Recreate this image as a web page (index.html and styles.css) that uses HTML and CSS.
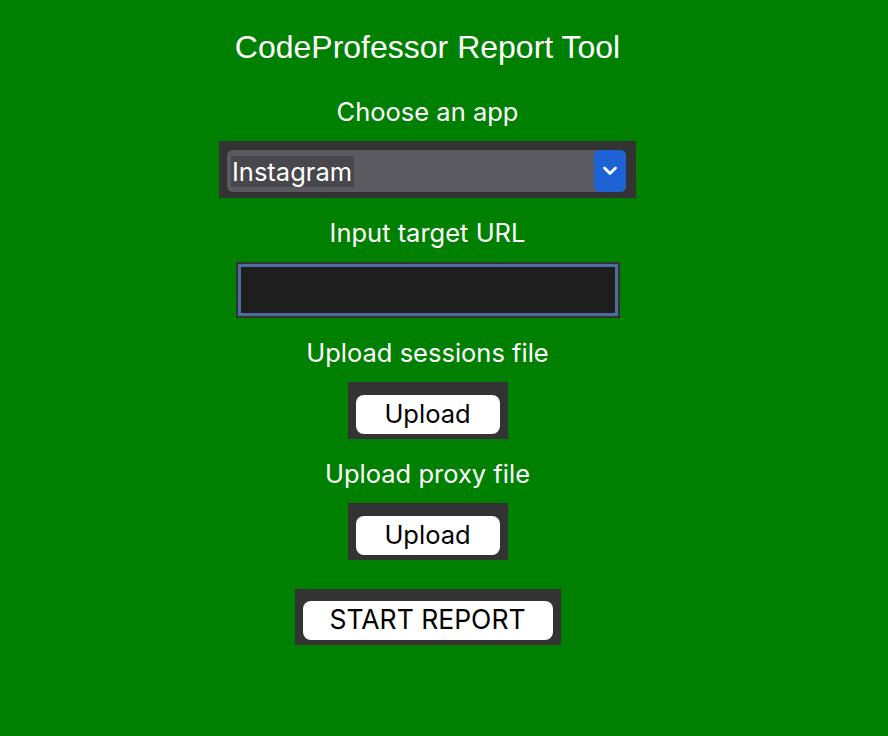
FILE: index.html
```html
<!DOCTYPE html>
<html lang="en">
<head>
  <meta charset="UTF-8" />
  <meta name="viewport" content="width=device-width, initial-scale=1.0"/>
  <title>CodeProfessor Report Tool</title>
  <link rel="stylesheet" href="styles.css">
</head>
<body>

  <div class="page">
    <h1>CodeProfessor Report Tool</h1>

    <!-- App choice -->
    <label class="field-label">Choose an app</label>
    <div class="frame frame-select">
      <div class="app-select">
        <span class="app-value">Instagram</span>
        <span class="app-arrow">
          <svg width="16" height="10" viewBox="0 0 16 10">
            <path d="M2.5 2 L8 7.5 L13.5 2" fill="none" stroke="#fff" stroke-width="2.8" stroke-linecap="round" stroke-linejoin="round"/>
          </svg>
        </span>
      </div>
    </div>

    <!-- Target -->
    <label class="field-label">Input target URL</label>
    <div class="frame frame-input">
      <input type="text" class="url-input">
    </div>

    <!-- Files -->
    <label class="field-label">Upload sessions file</label>
    <div class="frame frame-btn">
      <button class="white-button upload-button">Upload</button>
    </div>

    <label class="field-label">Upload proxy file</label>
    <div class="frame frame-btn">
      <button class="white-button upload-button">Upload</button>
    </div>

    <div class="frame frame-btn frame-start">
      <button class="white-button start-button">START REPORT</button>
    </div>
  </div>

</body>
</html>
```

FILE: styles.css
```css
*, *::before, *::after {
  box-sizing: border-box;
}

body, html {
  margin: 0;
  padding: 0;
  width: 100%;
  height: 100%;
  background: #008000;
  font-family: 'Inter', 'Liberation Sans', sans-serif;
  color: #fff;
}

.page {
  width: 855px;
  display: flex;
  flex-direction: column;
  align-items: center;
  padding-top: 27px;
}

h1 {
  font-family: 'Liberation Sans', Arial, sans-serif;
  font-weight: 400;
  font-size: 32px;
  line-height: 40px;
  margin: 0 0 30px;
}

.field-label {
  display: block;
  font-size: 25.5px;
  line-height: 30px;
  margin-bottom: 14px;
}

.frame {
  background: #333;
  margin-bottom: 20px;
}

/* select */
.frame-select {
  padding: 9px 10px 6px 8px;
}

.app-select {
  width: 399px;
  height: 42px;
  background: #5b5a60;
  border-radius: 6px;
  display: flex;
  align-items: center;
  justify-content: space-between;
  padding-left: 4px;
}

.app-value {
  background: #48474b;
  font-size: 25.5px;
  line-height: 31px;
  padding: 0 2px 0 1px;
}

.app-arrow {
  width: 32px;
  height: 42px;
  background: #1d63d6;
  border-radius: 6px;
  display: flex;
  align-items: center;
  justify-content: center;
}

/* url input */
.frame-input {
  padding: 2px;
}

.url-input {
  display: block;
  width: 380px;
  height: 52px;
  background: #1e1e1e;
  border: 3px solid #4d6c9e;
  outline: none;
  color: #fff;
  font-size: 20px;
  font-family: inherit;
}

/* buttons */
.frame-btn {
  padding: 13px 8px 5px;
}

.white-button {
  display: block;
  height: 39px;
  background: #fff;
  color: #000;
  border: none;
  border-radius: 8px;
  font-family: inherit;
  font-size: 25.5px;
  padding: 0 0 3px;
  cursor: pointer;
}

.upload-button {
  width: 144px;
}

.frame-start {
  margin-top: 9px;
  padding: 12px 8px 5px;
}

.start-button {
  width: 250px;
  font-size: 26.5px;
}
```
